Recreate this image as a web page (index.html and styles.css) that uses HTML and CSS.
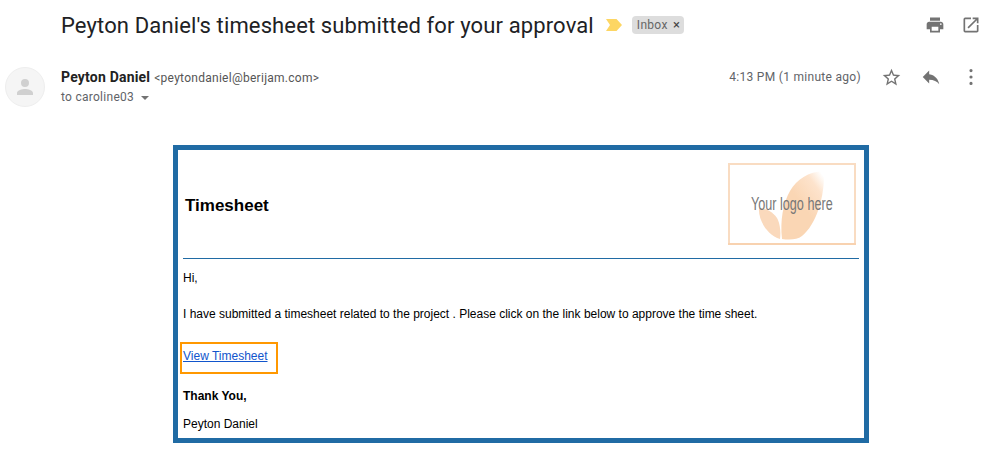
FILE: index.html
```html
<!DOCTYPE html>
<html lang="en">
<head>
    <meta charset="UTF-8">
    <title>Peyton Daniel's timesheet submitted for your approval</title>
    <link rel="stylesheet" href="styles.css">
</head>
<body>

<header class="subject-row">
    <h1 class="subject">Peyton Daniel's timesheet submitted for your approval</h1>
    <svg class="marker" width="16" height="12" viewBox="0 0 16 12"><path fill="#fdd663" d="M0 0h10.500L16 6l-5.500 6H0l4-6z"/></svg>
    <span class="label">Inbox <span class="label-x">×</span></span>
    <div class="subject-icons">
        <svg width="20" height="20" viewBox="0 0 24 24"><path fill="#737373" d="M19 8H5c-1.660 0-3 1.340-3 3v6h4v4h12v-4h4v-6c0-1.660-1.340-3-3-3zm-3 11H8v-5h8v5zm3-7c-.550 0-1-.450-1-1s.450-1 1-1 1 .450 1 1-.450 1-1 1zm-1-9H6v4h12V3z"/></svg>
        <svg width="20" height="20" viewBox="0 0 24 24"><path fill="#737373" d="M19 19H5V5h7V3H5a2 2 0 0 0-2 2v14a2 2 0 0 0 2 2h14c1.100 0 2-.900 2-2v-7h-2v7zM14 3v2h3.590l-9.830 9.830 1.410 1.410L19 6.410V10h2V3h-7z"/></svg>
    </div>
</header>

<section class="sender-row">
    <div class="avatar">
        <svg width="24" height="24" viewBox="0 0 24 24"><path fill="#d0d0d0" d="M12 12a4 4 0 1 0 0-8 4 4 0 0 0 0 8zm0 2c-2.670 0-8 1.340-8 4v2h16v-2c0-2.660-5.330-4-8-4z"/></svg>
    </div>
    <div class="sender-info">
        <div class="sender-line"><span class="sender-name">Peyton Daniel</span> <span class="sender-mail">&lt;peytondaniel@berijam.com&gt;</span></div>
        <div class="to-line">to caroline03 <span class="caret"></span></div>
    </div>
    <div class="msg-meta">
        <span class="msg-time">4:13 PM (1 minute ago)</span>
        <svg class="msg-star" width="21" height="21" viewBox="0 0 24 24"><path fill="#737373" d="M22 9.240l-7.190-.620L12 2 9.190 8.630 2 9.240l5.460 4.730L5.820 21 12 17.270 18.180 21l-1.630-7.030L22 9.240zM12 15.400l-3.760 2.270 1-4.280-3.320-2.880 4.380-.380L12 6.100l1.710 4.040 4.380.380-3.320 2.880 1 4.280L12 15.400z"/></svg>
        <svg class="msg-reply" width="22" height="22" viewBox="0 0 24 24"><path fill="#737373" d="M10 9V5l-7 7 7 7v-4.100c5 0 8.500 1.600 11 5.100-1-5-4-10-11-11z"/></svg>
        <svg class="msg-more" width="24" height="24" viewBox="0 0 24 24"><path fill="#737373" d="M12 7.200a1.600 1.600 0 1 0 0-3.200 1.600 1.600 0 0 0 0 3.200zm0 6.400a1.600 1.600 0 1 0 0-3.200 1.600 1.600 0 0 0 0 3.200zm0 6.400a1.600 1.600 0 1 0 0-3.200 1.600 1.600 0 0 0 0 3.200z"/></svg>
    </div>
</section>

<main class="mail-frame">
    <div class="mail-head">
        <h2 class="mail-title">Timesheet</h2>
        <svg class="mail-logo" width="128" height="82" viewBox="0 0 128 82">
            <defs>
                <linearGradient id="leafFill" x1="0.900" y1="0" x2="0.300" y2="0.700">
                    <stop offset="0" stop-color="#fff"/>
                    <stop offset="0.250" stop-color="#fde3cc"/>
                    <stop offset="0.700" stop-color="#fad6b4"/>
                </linearGradient>
            </defs>
            <rect x="1" y="1" width="126" height="80" fill="#fff" stroke="#f9dcc2" stroke-width="2"/>
            <path fill="#f8d2b0" d="M0 80h128v2H0z"/>
            <path fill="url(#leafFill)" d="M96 8C80 9 69 16 62 28c-7 12-10 30-8 48 7 1 15 1 20-3C88 62 97 34 96 8z"/>
            <path fill="#fad9bc" d="M31 45c-1 12 8 27 21 31 1-7 0-14-2-19-3-7-12-12-19-12z"/>
            <text class="logo-text" transform="translate(23 47) scale(.665 1)">Your logo here</text>
        </svg>
    </div>
    <p class="mail-line mail-hi">Hi,</p>
    <p class="mail-line mail-body">I have submitted a timesheet related to the project . Please click on the link below to approve the time sheet.</p>
    <div class="link-box"><a class="mail-link" href="#">View Timesheet</a></div>
    <p class="mail-line mail-thanks">Thank You,</p>
    <p class="mail-line mail-sign">Peyton Daniel</p>
</main>

</body>
</html>
```

FILE: styles.css
```css
* {
    box-sizing: border-box;
}
body {
    margin: 0;
    background-color: #fff;
    font-family: 'Roboto', sans-serif;
    color: #222;
}

.subject-row {
    display: flex;
    align-items: center;
    height: 50px;
    padding-left: 61px;
}
.subject {
    margin: 0;
    font-size: 22px;
    font-weight: 400;
    letter-spacing: .13px;
    color: #202124;
    white-space: nowrap;
}
.marker {
    margin-left: 12px;
}
.label {
    margin-left: 10px;
    padding: 0 4px 0 5px;
    height: 18px;
    line-height: 18px;
    background-color: #ddd;
    border-radius: 4px;
    font-size: 12px;
    letter-spacing: .3px;
    color: #666;
}
.label-x {
    margin-left: 2px;
    font-size: 13px;
    color: #444;
}
.subject-icons {
    display: flex;
    gap: 16px;
    margin-left: auto;
    margin-right: 19px;
}

.sender-row {
    display: flex;
    height: 40px;
    margin-top: 17px;
    padding-left: 5px;
}
.avatar {
    display: flex;
    align-items: center;
    justify-content: center;
    width: 40px;
    height: 40px;
    border-radius: 50%;
    background-color: #f5f5f5;
    border: 1px solid #eee;
}
.sender-info {
    margin-left: 16px;
    padding-top: 1px;
}
.sender-line {
    height: 20px;
    line-height: 18px;
    white-space: nowrap;
}
.sender-name {
    font-size: 14px;
    font-weight: 700;
    letter-spacing: .2px;
    color: #222;
}
.sender-mail {
    font-size: 12px;
    letter-spacing: .27px;
    color: #555;
}
.to-line {
    line-height: 18px;
    font-size: 12px;
    letter-spacing: .27px;
    color: #5f6368;
}
.caret {
    display: inline-block;
    margin-left: 4px;
    vertical-align: middle;
    border-top: 4px solid #737373;
    border-left: 4px solid transparent;
    border-right: 4px solid transparent;
}
.msg-meta {
    display: flex;
    align-items: center;
    height: 20px;
    margin-left: auto;
    font-size: 12px;
    letter-spacing: .3px;
    color: #5f6368;
}
.msg-star {
    margin-left: 20px;
}
.msg-reply {
    margin-left: 18px;
}
.msg-more {
    margin-left: 17px;
    margin-right: 17px;
}

.mail-frame {
    width: 696px;
    height: 298px;
    margin: 38px 0 0 173px;
    padding: 0 5px;
    border: 5px solid #206ba4;
    font-family: 'Liberation Sans', Arial, sans-serif;
    font-size: 12px;
    color: #000;
}
.mail-head {
    display: flex;
    align-items: center;
    justify-content: space-between;
    height: 109px;
    padding: 0 3px 0 2px;
    border-bottom: 1px solid #206ba4;
}
.mail-title {
    margin: 4px 0 0;
    font-size: 17px;
    font-weight: 700;
}
.logo-text {
    font-family: 'Liberation Sans', Arial, sans-serif;
    font-size: 19px;
    fill: #777;
}
.mail-line {
    margin: 0;
    line-height: 14px;
}
.mail-hi {
    margin-top: 12px;
}
.mail-body {
    margin-top: 22px;
}
.link-box {
    width: 98px;
    height: 32px;
    margin: 21px 0 0 -3px;
    padding: 5px 0 0 1px;
    border: 2px solid #ff9800;
}
.mail-link {
    color: #1155cc;
}
.mail-thanks {
    margin-top: 15px;
    font-weight: 700;
}
.mail-sign {
    margin-top: 14px;
}
```
